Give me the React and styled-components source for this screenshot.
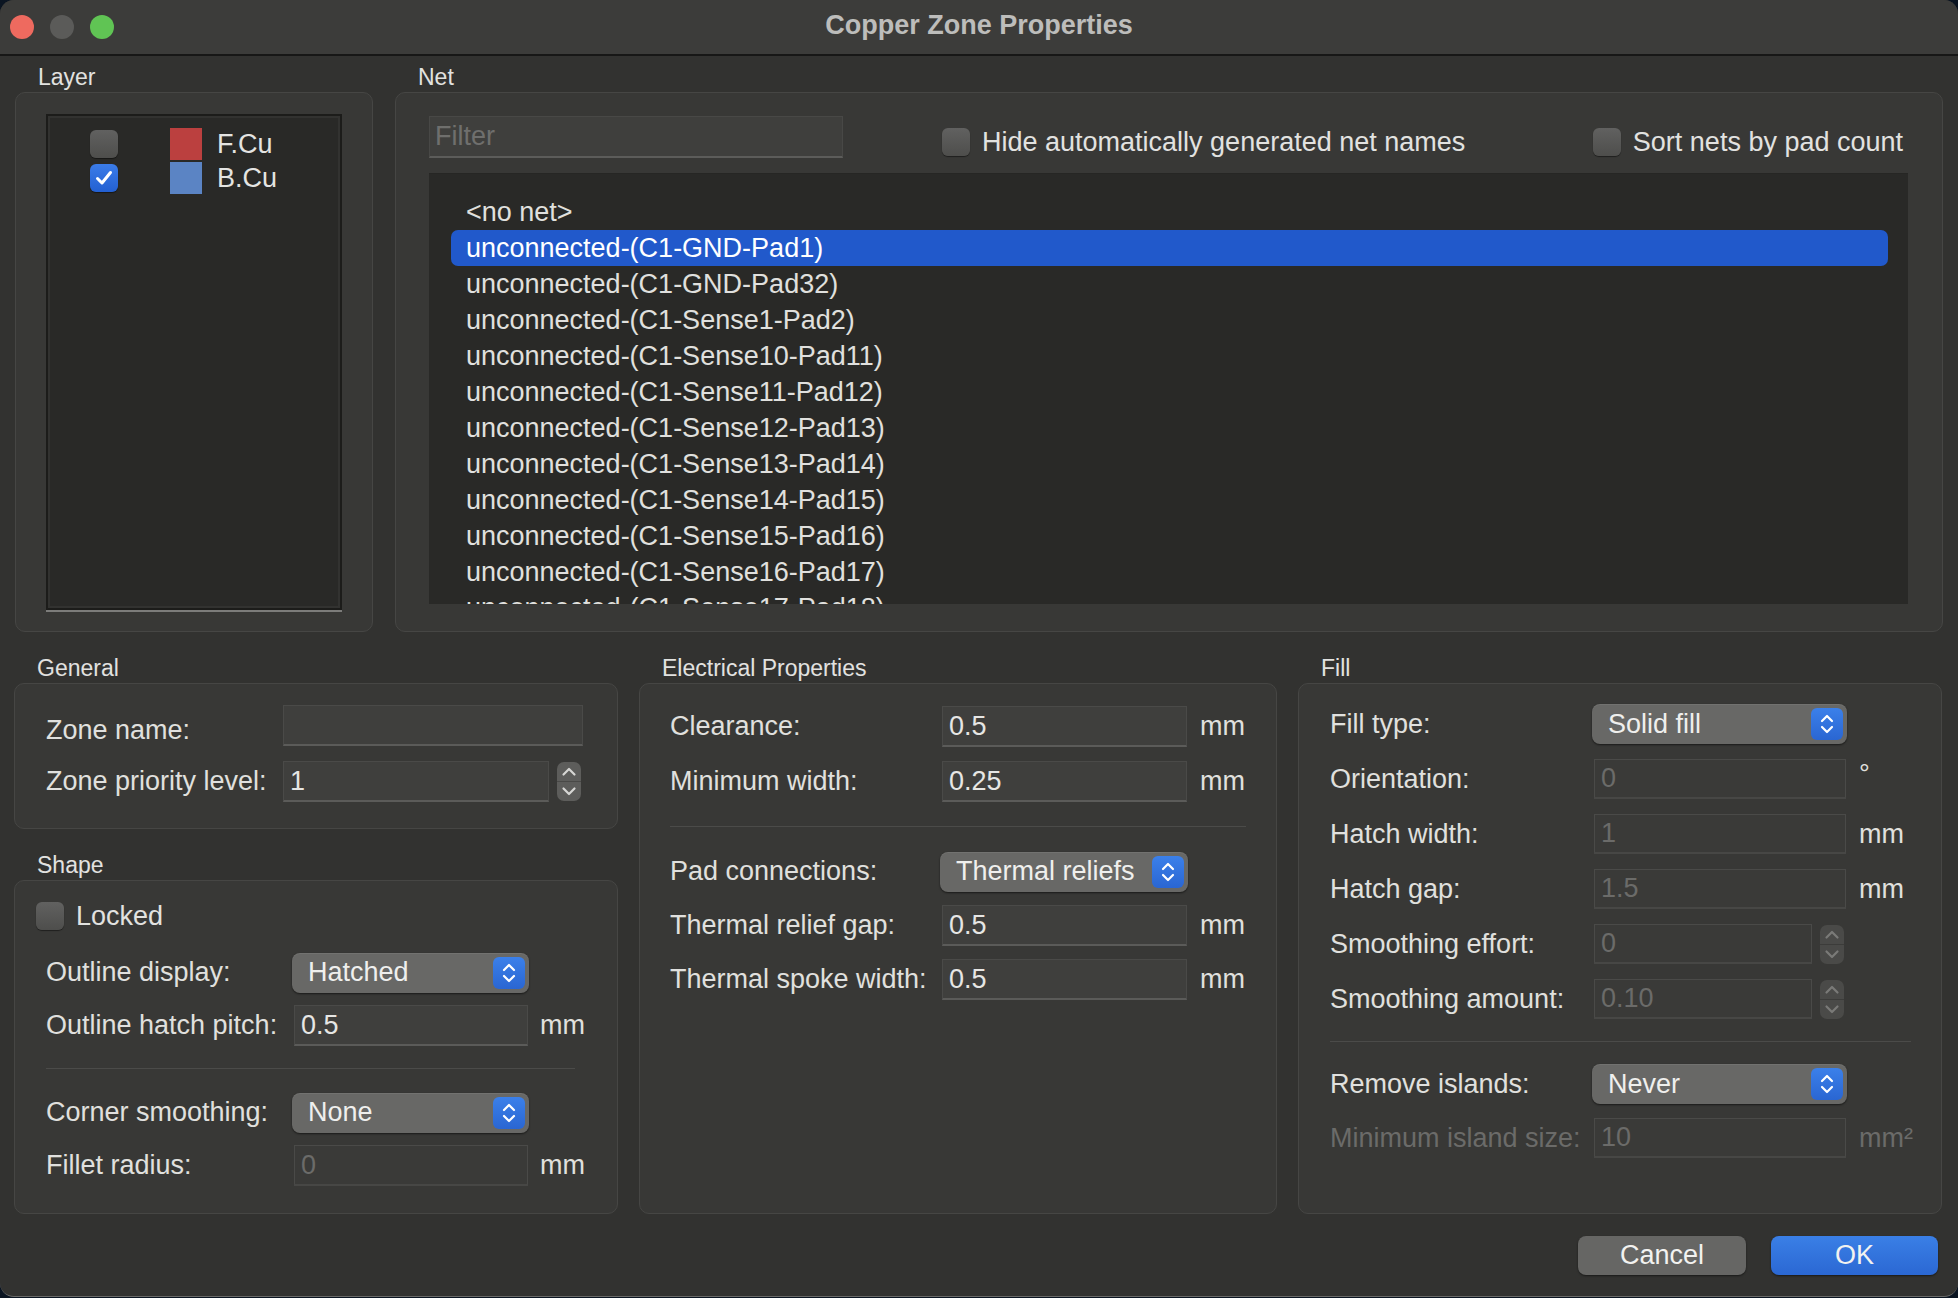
import React from 'react';
import styled, { createGlobalStyle } from 'styled-components';

const GlobalStyle = createGlobalStyle`
  html, body { margin: 0; padding: 0; background: #0b1522; }
  body { font-family: "Liberation Sans", Arial, sans-serif; -webkit-font-smoothing: antialiased; }
  #root { width: 1958px; height: 1298px; }
`;

const Window = styled.div`
  width: 1958px;
  height: 1297px;
  box-sizing: border-box;
  background: #323230;
  border-radius: 14px;
  border-bottom: 1px solid #6a6a68;
  overflow: hidden;
  display: flex;
  flex-direction: column;
  color: #dfdfdd;
  font-size: 27px;
`;

const TitleBar = styled.div`
  height: 54px;
  flex: none;
  background: #3c3c3a;
  border-bottom: 2px solid #171716;
  display: grid;
  grid-template-columns: 1fr auto 1fr;
  align-items: center;
`;

const Lights = styled.div`
  display: flex;
  gap: 16px;
  padding-left: 10px;
`;

const Light = styled.span`
  width: 24px;
  height: 24px;
  border-radius: 50%;
  background: ${p => p.$c};
`;

const Title = styled.div`
  font-weight: bold;
  font-size: 27px;
  color: #bdbdbb;
  margin-top: -3px;
`;

const TopRow = styled.div`
  display: flex;
  gap: 22px;
  padding: 8px 15px 0 15px;
`;

const Section = styled.div`
  display: flex;
  flex-direction: column;
  width: ${p => (p.$w ? `${p.$w}px` : 'auto')};
  flex: ${p => (p.$grow ? 1 : 'none')};
`;

const SectionTitle = styled.div`
  font-size: 23px;
  line-height: 26px;
  height: 26px;
  padding-left: 23px;
  margin-bottom: 2px;
  color: #e2e2e0;
`;

const GroupBox = styled.div`
  box-sizing: border-box;
  background: #383836;
  border: 1px solid #464644;
  border-radius: 10px;
  height: ${p => (p.$h ? `${p.$h}px` : 'auto')};
  flex: ${p => (p.$h ? 'none' : 1)};
  display: flex;
  flex-direction: column;
  padding: ${p => p.$pad};
`;

const LayerList = styled.div`
  flex: 1;
  background: #292927;
  border: 2px solid #1c1c1a;
  box-shadow: inset 0 0 0 2px #323230, 0 2px 0 #7c7c7a;
  padding-top: 11px;
`;

const LayerRow = styled.div`
  height: 34px;
  display: flex;
  align-items: center;
  padding-left: 42px;
`;

const Swatch = styled.span`
  width: 32px;
  height: 32px;
  margin-left: 52px;
  background: ${p => p.$c};
`;

const LayerName = styled.span`
  margin-left: 15px;
  font-size: 27px;
  color: #e4e4e2;
`;

const Check = styled.span`
  flex: none;
  width: 28px;
  height: 28px;
  border-radius: 6px;
  box-sizing: border-box;
  background: ${p => (p.$checked ? 'linear-gradient(#3b7ce8, #2360d2)' : 'linear-gradient(#616160, #4e4e4c)')};
  box-shadow: 0 1px 1px rgba(0, 0, 0, 0.45);
  display: inline-flex;
  align-items: center;
  justify-content: center;
`;

const CheckLabel = styled.label`
  display: flex;
  align-items: center;
  gap: 12px;
  font-size: 27px;
  color: #e2e2e0;
  white-space: nowrap;
  margin-left: ${p => p.$ml || '0'};
  margin-top: ${p => p.$mt || '0'};
`;

const FilterRow = styled.div`
  display: flex;
  align-items: center;
  height: 42px;
  padding-right: 5px;
`;

const Filter = styled.div`
  box-sizing: border-box;
  width: 414px;
  height: 42px;
  background: #3f3f3d;
  border: 1px solid #484846;
  border-bottom: 2px solid #5c5c5a;
  color: #6f6f6d;
  font-size: 27px;
  display: flex;
  align-items: center;
  padding-left: 5px;
`;

const NetList = styled.div`
  margin-top: 15px;
  flex: 1;
  background: #292927;
  border-top: 1px solid #262624;
  padding-top: 20px;
  overflow: hidden;
`;

const NetItem = styled.div`
  height: 36px;
  line-height: 36px;
  font-size: 27px;
  white-space: nowrap;
  color: ${p => (p.$selected ? '#ffffff' : '#e0e0de')};
  background: ${p => (p.$selected ? '#2159cb' : 'transparent')};
  border-radius: 7px;
  margin: ${p => (p.$selected ? '0 20px 0 22px' : '0')};
  padding-left: ${p => (p.$selected ? '15px' : '37px')};
`;

const BottomRow = styled.div`
  display: grid;
  grid-template-columns: 604px 638px 644px;
  column-gap: 21px;
  padding: 23px 16px 0 14px;
`;

const Column = styled.div`
  display: flex;
  flex-direction: column;
`;

const Spacer = styled.div`
  height: ${p => p.$h}px;
  flex: none;
`;

const FieldRow = styled.div`
  display: grid;
  grid-template-columns: ${p => p.$lw}px ${p => p.$cw}px auto;
  align-items: center;
  height: ${p => p.$h || 41}px;
  flex: none;
`;

const Label = styled.span`
  font-size: 27px;
  white-space: nowrap;
  padding-top: ${p => p.$dy || 0}px;
  color: ${p => (p.$disabled ? '#6b6b69' : '#e0e0de')};
`;

const Unit = styled.span`
  font-size: 27px;
  margin-left: ${p => p.$ug || 13}px;
  color: ${p => (p.$disabled ? '#6b6b69' : '#e0e0de')};
  white-space: nowrap;
  align-self: ${p => (p.$top ? 'start' : 'center')};
`;

const Input = styled.div`
  box-sizing: border-box;
  height: 100%;
  flex: 1;
  min-width: 0;
  background: ${p => (p.$disabled ? '#3a3a38' : '#3f3f3d')};
  border: 1px solid #4a4a48;
  border-bottom: 2px solid ${p => (p.$disabled ? '#474745' : '#5b5b59')};
  display: flex;
  align-items: center;
  padding-left: 6px;
  font-size: 27px;
  color: ${p => (p.$disabled ? '#6b6b69' : '#e6e6e4')};
`;

const Control = styled.div`
  display: flex;
  align-items: center;
  gap: 8px;
  height: 100%;
`;

const Popup = styled.div`
  box-sizing: border-box;
  height: 40px;
  width: calc(100% + 3px);
  margin-left: -2px;
  border-radius: 8px;
  background: #686866;
  box-shadow: 0 1px 2px rgba(0, 0, 0, 0.55), inset 0 1px 0 rgba(255, 255, 255, 0.07);
  display: flex;
  align-items: center;
  justify-content: space-between;
  padding: 0 4px 0 16px;
  font-size: 27px;
  color: #efefed;
  white-space: nowrap;
`;

const PopupArrows = styled.span`
  width: 32px;
  height: 32px;
  border-radius: 6px;
  background: linear-gradient(#3b80ea, #2a66d2);
  display: flex;
  align-items: center;
  justify-content: center;
`;

const Spin = styled.div`
  flex: none;
  width: 24px;
  height: 39px;
  border-radius: 7px;
  box-sizing: border-box;
  background: ${p => (p.$disabled ? '#4a4a48' : '#5d5d5b')};
  display: flex;
  flex-direction: column;
  overflow: hidden;
`;

const SpinHalf = styled.span`
  flex: 1;
  display: flex;
  align-items: center;
  justify-content: center;
  border-top: ${p => (p.$down ? `1px solid ${p.$disabled ? '#3c3c3a' : '#494947'}` : 'none')};
`;

const Separator = styled.div`
  height: 1px;
  flex: none;
  background: #4b4b49;
  margin: ${p => p.$m};
`;

const LockRow = styled.div`
  display: flex;
  padding-left: 21px;
  height: 28px;
  flex: none;
`;

const Rows = styled.div`
  display: flex;
  flex-direction: column;
  gap: ${p => p.$gap}px;
  padding-left: ${p => p.$pl || 0}px;
`;

const ButtonRow = styled.div`
  display: flex;
  justify-content: flex-end;
  gap: 25px;
  padding: 22px 20px 0 0;
`;

const Button = styled.div`
  width: ${p => p.$w}px;
  height: 39px;
  border-radius: 8px;
  display: flex;
  align-items: center;
  justify-content: center;
  font-size: 27px;
  color: #f2f2f0;
  background: ${p => (p.$primary ? 'linear-gradient(#3a7fe6, #2b68d3)' : '#666664')};
  box-shadow: 0 1px 2px rgba(0, 0, 0, 0.5);
`;

const CheckMark = () => (
  <svg width="18" height="16" viewBox="0 0 18 16">
    <path d="M2.5 8.5 L7 13 L15.5 2.5" fill="none" stroke="#fff" strokeWidth="3" strokeLinecap="round" strokeLinejoin="round" />
  </svg>
);

const UpDown = () => (
  <svg width="16" height="24" viewBox="0 0 16 24">
    <path d="M3 9 L8 4 L13 9" fill="none" stroke="#fff" strokeWidth="2.2" strokeLinecap="round" strokeLinejoin="round" />
    <path d="M3 15 L8 20 L13 15" fill="none" stroke="#fff" strokeWidth="2.2" strokeLinecap="round" strokeLinejoin="round" />
  </svg>
);

const Chevron = ({ down, color }) => (
  <svg width="16" height="11" viewBox="0 0 16 11">
    <path d={down ? 'M2.5 2.5 L8 8 L13.5 2.5' : 'M2.5 8.5 L8 3 L13.5 8.5'} fill="none" stroke={color} strokeWidth="2.2" strokeLinecap="round" strokeLinejoin="round" />
  </svg>
);

const Spinner = ({ disabled }) => {
  const c = disabled ? '#7a7a78' : '#d6d6d4';
  return (
    <Spin $disabled={disabled}>
      <SpinHalf><Chevron color={c} /></SpinHalf>
      <SpinHalf $down $disabled={disabled}><Chevron down color={c} /></SpinHalf>
    </Spin>
  );
};

const Select = ({ value }) => (
  <Popup>
    <span>{value}</span>
    <PopupArrows><UpDown /></PopupArrows>
  </Popup>
);

const CheckBox = ({ checked }) => <Check $checked={checked}>{checked && <CheckMark />}</Check>;

const nets = [
  '<no net>',
  'unconnected-(C1-GND-Pad1)',
  'unconnected-(C1-GND-Pad32)',
  'unconnected-(C1-Sense1-Pad2)',
  'unconnected-(C1-Sense10-Pad11)',
  'unconnected-(C1-Sense11-Pad12)',
  'unconnected-(C1-Sense12-Pad13)',
  'unconnected-(C1-Sense13-Pad14)',
  'unconnected-(C1-Sense14-Pad15)',
  'unconnected-(C1-Sense15-Pad16)',
  'unconnected-(C1-Sense16-Pad17)',
  'unconnected-(C1-Sense17-Pad18)',
];

export default function App() {
  return (
    <>
      <GlobalStyle />
      <Window>
        <TitleBar>
          <Lights>
            <Light $c="#ee6a5f" />
            <Light $c="#5b5b59" />
            <Light $c="#60c454" />
          </Lights>
          <Title>Copper Zone Properties</Title>
          <div />
        </TitleBar>

        <TopRow>
          <Section $w={358}>
            <SectionTitle>Layer</SectionTitle>
            <GroupBox $h={540} $pad="21px 30px 21px 30px">
              <LayerList>
                <LayerRow>
                  <CheckBox />
                  <Swatch $c="#bb403f" />
                  <LayerName>F.Cu</LayerName>
                </LayerRow>
                <LayerRow>
                  <CheckBox checked />
                  <Swatch $c="#5b84c4" />
                  <LayerName>B.Cu</LayerName>
                </LayerRow>
              </LayerList>
            </GroupBox>
          </Section>

          <Section $grow>
            <SectionTitle>Net</SectionTitle>
            <GroupBox $h={540} $pad="23px 34px 27px 33px">
              <FilterRow>
                <Filter>Filter</Filter>
                <CheckLabel $ml="99px" $mt="10px"><CheckBox />Hide automatically generated net names</CheckLabel>
                <CheckLabel $ml="auto" $mt="10px"><CheckBox />Sort nets by pad count</CheckLabel>
              </FilterRow>
              <NetList>
                {nets.map((n, i) => (
                  <NetItem key={n} $selected={i === 1}>{n}</NetItem>
                ))}
              </NetList>
            </GroupBox>
          </Section>
        </TopRow>

        <BottomRow>
          <Column>
            <Section>
              <SectionTitle>General</SectionTitle>
              <GroupBox $h={146} $pad="21px 33px 0 31px">
                <Rows $gap={15}>
                  <FieldRow $lw={237} $cw={300}>
                    <Label $dy={10}>Zone name:</Label>
                    <Control><Input /></Control>
                  </FieldRow>
                  <FieldRow $lw={237} $cw={298}>
                    <Label>Zone priority level:</Label>
                    <Control><Input>1</Input><Spinner /></Control>
                  </FieldRow>
                </Rows>
              </GroupBox>
            </Section>
            <Spacer $h={23} />
            <Section>
              <SectionTitle>Shape</SectionTitle>
              <GroupBox $h={334} $pad="21px 0 0 0">
                <LockRow>
                  <CheckLabel><CheckBox />Locked</CheckLabel>
                </LockRow>
                <Spacer $h={22} />
                <Rows $gap={12} $pl={31}>
                  <FieldRow $lw={248} $cw={234}>
                    <Label>Outline display:</Label>
                    <Select value="Hatched" />
                  </FieldRow>
                  <FieldRow $lw={248} $cw={234}>
                    <Label>Outline hatch pitch:</Label>
                    <Control><Input>0.5</Input></Control>
                    <Unit $ug={12}>mm</Unit>
                  </FieldRow>
                </Rows>
                <Separator $m="22px 42px 23px 31px" />
                <Rows $gap={12} $pl={31}>
                  <FieldRow $lw={248} $cw={234}>
                    <Label>Corner smoothing:</Label>
                    <Select value="None" />
                  </FieldRow>
                  <FieldRow $lw={248} $cw={234}>
                    <Label>Fillet radius:</Label>
                    <Control><Input $disabled>0</Input></Control>
                    <Unit $ug={12}>mm</Unit>
                  </FieldRow>
                </Rows>
              </GroupBox>
            </Section>
          </Column>

          <Section>
            <SectionTitle>Electrical Properties</SectionTitle>
            <GroupBox $pad="22px 0 0 30px">
              <Rows $gap={14}>
                <FieldRow $lw={272} $cw={245}>
                  <Label>Clearance:</Label>
                  <Control><Input>0.5</Input></Control>
                  <Unit>mm</Unit>
                </FieldRow>
                <FieldRow $lw={272} $cw={245}>
                  <Label>Minimum width:</Label>
                  <Control><Input>0.25</Input></Control>
                  <Unit>mm</Unit>
                </FieldRow>
              </Rows>
              <Separator $m="24px 30px 24px 0" />
              <Rows $gap={13}>
                <FieldRow $lw={272} $cw={245}>
                  <Label>Pad connections:</Label>
                  <Select value="Thermal reliefs" />
                </FieldRow>
                <FieldRow $lw={272} $cw={245}>
                  <Label>Thermal relief gap:</Label>
                  <Control><Input>0.5</Input></Control>
                  <Unit>mm</Unit>
                </FieldRow>
                <FieldRow $lw={272} $cw={245}>
                  <Label>Thermal spoke width:</Label>
                  <Control><Input>0.5</Input></Control>
                  <Unit>mm</Unit>
                </FieldRow>
              </Rows>
            </GroupBox>
          </Section>

          <Section>
            <SectionTitle>Fill</SectionTitle>
            <GroupBox $pad="20px 0 0 31px">
              <Rows $gap={15}>
                <FieldRow $lw={264} $cw={252} $h={40}>
                  <Label>Fill type:</Label>
                  <Select value="Solid fill" />
                </FieldRow>
                <FieldRow $lw={264} $cw={252} $h={40}>
                  <Label>Orientation:</Label>
                  <Control><Input $disabled>0</Input></Control>
                  <Unit $top>°</Unit>
                </FieldRow>
                <FieldRow $lw={264} $cw={252} $h={40}>
                  <Label>Hatch width:</Label>
                  <Control><Input $disabled>1</Input></Control>
                  <Unit>mm</Unit>
                </FieldRow>
                <FieldRow $lw={264} $cw={252} $h={40}>
                  <Label>Hatch gap:</Label>
                  <Control><Input $disabled>1.5</Input></Control>
                  <Unit>mm</Unit>
                </FieldRow>
                <FieldRow $lw={264} $cw={250} $h={40}>
                  <Label>Smoothing effort:</Label>
                  <Control><Input $disabled>0</Input><Spinner disabled /></Control>
                </FieldRow>
                <FieldRow $lw={264} $cw={250} $h={40}>
                  <Label>Smoothing amount:</Label>
                  <Control><Input $disabled>0.10</Input><Spinner disabled /></Control>
                </FieldRow>
              </Rows>
              <Separator $m="22px 30px 22px 0" />
              <Rows $gap={14}>
                <FieldRow $lw={264} $cw={252} $h={40}>
                  <Label>Remove islands:</Label>
                  <Select value="Never" />
                </FieldRow>
                <FieldRow $lw={264} $cw={252} $h={40}>
                  <Label $disabled>Minimum island size:</Label>
                  <Control><Input $disabled>10</Input></Control>
                  <Unit $disabled>mm²</Unit>
                </FieldRow>
              </Rows>
            </GroupBox>
          </Section>
        </BottomRow>

        <ButtonRow>
          <Button $w={168}>Cancel</Button>
          <Button $w={167} $primary>OK</Button>
        </ButtonRow>
      </Window>
    </>
  );
}
